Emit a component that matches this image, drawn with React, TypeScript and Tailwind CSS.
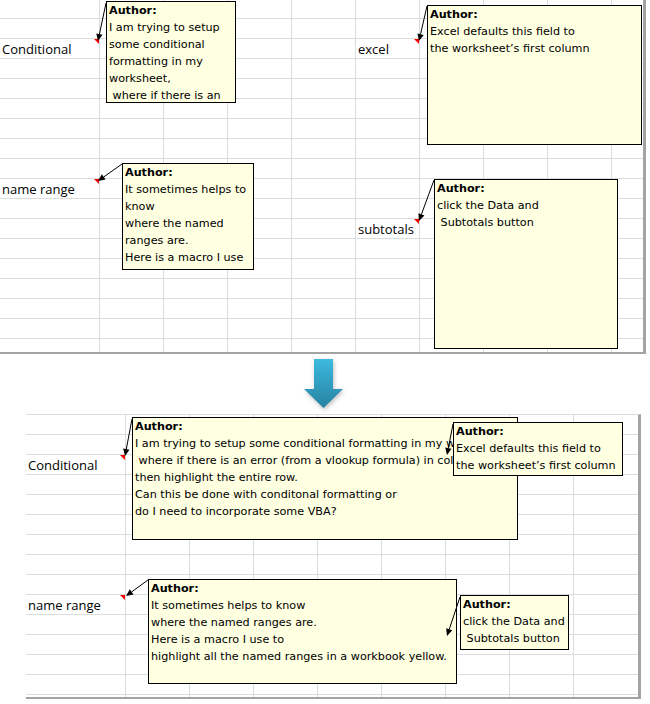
import React from "react";

type CellText = { r: number; c: number; text: string };

type Note = {
  box: string;
  lines: string[];
};

type Link = { x1: number; y1: number; x2: number; y2: number };

const gridCell = "shrink-0 flex items-center pl-[2px] border-[#dadcdd] whitespace-nowrap";

function SheetGrid({
  rows,
  cols,
  texts,
}: {
  rows: string[];
  cols: string[];
  texts: CellText[];
}) {
  return (
    <>
      {rows.map((rh, r) => (
        <div key={r} className={`flex ${rh} ${r === rows.length - 1 ? "" : "shrink-0"}`}>
          {cols.map((cw, c) => {
            const t = texts.find((x) => x.r === r && x.c === c);
            const isLastCol = c === cols.length - 1;
            const isLastRow = r === rows.length - 1;
            return (
              <div
                key={c}
                className={`${gridCell} ${cw} ${isLastCol ? "" : "border-r"} ${isLastRow ? "" : "border-b"}`}
              >
                {t && (
                  <span className="text-[13px] leading-[19px] text-black font-['Open_Sans',sans-serif] pt-[1px]">
                    {t.text}
                  </span>
                )}
              </div>
            );
          })}
        </div>
      ))}
    </>
  );
}

function Comment({ note }: { note: Note }) {
  return (
    <div
      className={`absolute ${note.box} bg-[#ffffe1] border border-black overflow-hidden pl-[2px] font-['DejaVu_Sans',sans-serif] text-[11.2px] leading-[17px] text-black`}
    >
      <div className="font-bold">Author:</div>
      {note.lines.map((l, i) => (
        <div key={i} className="whitespace-pre">
          {l}
        </div>
      ))}
    </div>
  );
}

function Pointer({ x1, y1, x2, y2 }: Link) {
  const dx = x2 - x1;
  const dy = y2 - y1;
  const len = Math.hypot(dx, dy);
  const ux = dx / len;
  const uy = dy / len;
  const L = 7;
  const W = 3.2;
  const bx = x2 - ux * L;
  const by = y2 - uy * L;
  const pts = `${x2},${y2} ${bx - uy * W},${by + ux * W} ${bx + uy * W},${by - ux * W}`;
  return (
    <g>
      <line x1={x1} y1={y1} x2={bx} y2={by} stroke="#000" strokeWidth={1} />
      <polygon points={pts} fill="#000" />
    </g>
  );
}

function Flag({ x, y }: { x: number; y: number }) {
  return <polygon points={`${x - 5},${y} ${x},${y} ${x},${y + 5}`} fill="#ff0000" />;
}

const topNotes: Note[] = [
  {
    box: "left-[106px] top-[1px] w-[130px] h-[102px]",
    lines: ["I am trying to setup", "some conditional", "formatting in my", "worksheet,", " where if there is an"],
  },
  {
    box: "left-[427px] top-[5px] w-[215px] h-[140px]",
    lines: ["Excel defaults this field to", "the worksheet\u2019s first column"],
  },
  {
    box: "left-[122px] top-[163px] w-[132px] h-[107px]",
    lines: ["It sometimes helps to", "know", "where the named", "ranges are.", "Here is a macro I use"],
  },
  {
    box: "left-[434px] top-[179px] w-[184px] h-[170px]",
    lines: ["click the Data and", " Subtotals button"],
  },
];

const bottomNotes: Note[] = [
  {
    box: "left-[106px] top-[3px] w-[386px] h-[123px]",
    lines: [
      "I am trying to setup some conditional formatting in my worksheet,",
      " where if there is an error (from a vlookup formula) in column A",
      "then highlight the entire row.",
      "Can this be done with conditonal formatting or",
      "do I need to incorporate some VBA?",
    ],
  },
  {
    box: "left-[427px] top-[8px] w-[170px] h-[54px]",
    lines: ["Excel defaults this field to", "the worksheet\u2019s first column"],
  },
  {
    box: "left-[122px] top-[165px] w-[309px] h-[105px]",
    lines: [
      "It sometimes helps to know",
      "where the named ranges are.",
      "Here is a macro I use to",
      "highlight all the named ranges in a workbook yellow.",
    ],
  },
  {
    box: "left-[434px] top-[181px] w-[109px] h-[55px]",
    lines: ["click the Data and", " Subtotals button"],
  },
];

const topLinks: Link[] = [
  { x1: 106, y1: 3, x2: 98, y2: 41 },
  { x1: 427, y1: 6, x2: 419, y2: 41 },
  { x1: 122, y1: 164, x2: 98, y2: 181 },
  { x1: 434, y1: 180, x2: 419, y2: 221 },
];

const bottomLinks: Link[] = [
  { x1: 106, y1: 5, x2: 99, y2: 42 },
  { x1: 427, y1: 10, x2: 421, y2: 41 },
  { x1: 122, y1: 166, x2: 100, y2: 182 },
  { x1: 434, y1: 183, x2: 421, y2: 222 },
];

export default function App() {
  const topRows = ["h-[19px]", ...Array(16).fill("h-5"), "flex-1"];
  const topCols = ["w-[100px]", ...Array(8).fill("w-16"), "flex-1"];
  const bottomRows = [...Array(14).fill("h-5"), "flex-1"];
  const bottomCols = ["w-[100px]", ...Array(7).fill("w-16"), "flex-1"];

  return (
    <div className="w-[650px] h-[704px] bg-white overflow-hidden">
      {/* Before: comments with wrapped boxes */}
      <div className="relative w-[646px] h-[354px]">
        <div className="w-full h-full flex flex-col overflow-hidden border-r-[3px] border-b-2 border-[#a3a3a3]">
          <SheetGrid
            rows={topRows}
            cols={topCols}
            texts={[
              { r: 2, c: 0, text: "Conditional" },
              { r: 2, c: 5, text: "excel" },
              { r: 9, c: 0, text: "name range" },
              { r: 11, c: 5, text: "subtotals" },
            ]}
          />
        </div>
        {topNotes.map((n, i) => (
          <Comment key={i} note={n} />
        ))}
        <svg className="absolute left-0 top-0 pointer-events-none" width={646} height={354}>
          <Flag x={99} y={39} />
          <Flag x={419} y={39} />
          <Flag x={99} y={179} />
          <Flag x={419} y={219} />
          {topLinks.map((l, i) => (
            <Pointer key={i} {...l} />
          ))}
        </svg>
      </div>

      {/* Down arrow */}
      <div className="h-[60px] pl-[303px] pt-[5px]">
        <svg width={44} height={54} className="drop-shadow-[1px_2px_2px_rgba(0,0,0,0.25)]">
          <defs>
            <linearGradient id="blueDown" x1="0" y1="0" x2="0" y2="1">
              <stop offset="0" stopColor="#3dbadf" />
              <stop offset="1" stopColor="#2683a2" />
            </linearGradient>
          </defs>
          <polygon points="11,0 30,0 30,30 40,30 20.5,49 1,30 11,30" fill="url(#blueDown)" />
        </svg>
      </div>

      {/* After: comments resized to fit */}
      <div className="relative ml-[26px] w-[615px] h-[285px]">
        <div className="w-full h-full flex flex-col overflow-hidden border-t border-t-[#dadcdd] border-r-[3px] border-r-[#a3a3a3] border-b-2 border-b-[#a3a3a3]">
          <SheetGrid
            rows={bottomRows}
            cols={bottomCols}
            texts={[
              { r: 2, c: 0, text: "Conditional" },
              { r: 9, c: 0, text: "name range" },
            ]}
          />
        </div>
        {bottomNotes.map((n, i) => (
          <Comment key={i} note={n} />
        ))}
        <svg className="absolute left-0 top-0 pointer-events-none" width={615} height={285}>
          <Flag x={99} y={41} />
          <Flag x={99} y={181} />
          {bottomLinks.map((l, i) => (
            <Pointer key={i} {...l} />
          ))}
        </svg>
      </div>
    </div>
  );
}
